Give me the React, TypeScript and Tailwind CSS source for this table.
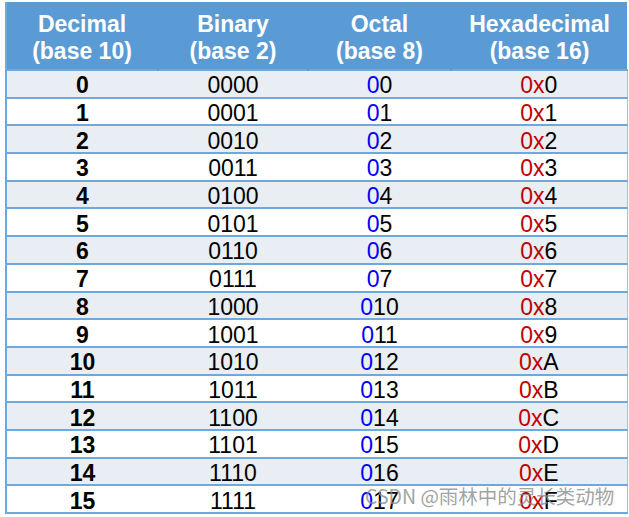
const rows = Array.from({ length: 16 }, (_, i) => ({
  dec: String(i),
  bin: i.toString(2).padStart(4, "0"),
  oct: i.toString(8),
  hex: i.toString(16).toUpperCase(),
}));

export default function App() {
  return (
    <div className="relative h-[517px] w-[629px] bg-white pl-[5px] pt-[2px] font-['Liberation_Sans',Arial,sans-serif]">
      <table className="w-[621px] table-fixed border-collapse text-[23px] leading-[22px] text-black">
        <colgroup>
          <col className="w-[152px]" />
          <col className="w-[150px]" />
          <col className="w-[143px]" />
          <col className="w-[176px]" />
        </colgroup>
        <thead>
          <tr className="h-[68px] bg-[#5b9bd5] text-white">
            {[
              ["Decimal", "(base 10)"],
              ["Binary", "(base 2)"],
              ["Octal", "(base 8)"],
              ["Hexadecimal", "(base 16)"],
            ].map(([a, b]) => (
              <th key={a} className="border-l-2 border-[#5b9bd5] p-0 pt-[4px] text-center font-bold leading-[27px] first:border-l-[#6fa8dc]">
                {a}
                <br />
                {b}
              </th>
            ))}
          </tr>
        </thead>
        <tbody>
          {rows.map((r, i) => (
            <tr
              key={r.dec}
              className={`h-[27.7px] border-t-2 border-[#6fa8dc] ${i % 2 === 0 ? "bg-[#e9edf4]" : "bg-white"} ${i === 15 ? "border-b-2" : ""}`}
            >
              <td className="border-l-2 border-[#6fa8dc] p-0 pt-[3px] text-center font-bold">{r.dec}</td>
              <td className="p-0 pt-[3px] text-center">{r.bin}</td>
              <td className="p-0 pt-[3px] text-center">
                <span className="text-[#0000ff]">0</span>
                {r.oct}
              </td>
              <td className="border-r border-[#9dc3e6] p-0 pt-[3px] text-center">
                <span className="text-[#c00000]">0x</span>
                {r.hex}
              </td>
            </tr>
          ))}
        </tbody>
      </table>
      <div className="absolute left-[365px] top-[486px] text-[19.5px] leading-none text-[#8a8a8a]/80 font-['Noto_Sans_CJK_SC','Noto_Sans',sans-serif]">
        CSDN @雨林中的灵长类动物
      </div>
    </div>
  );
}
